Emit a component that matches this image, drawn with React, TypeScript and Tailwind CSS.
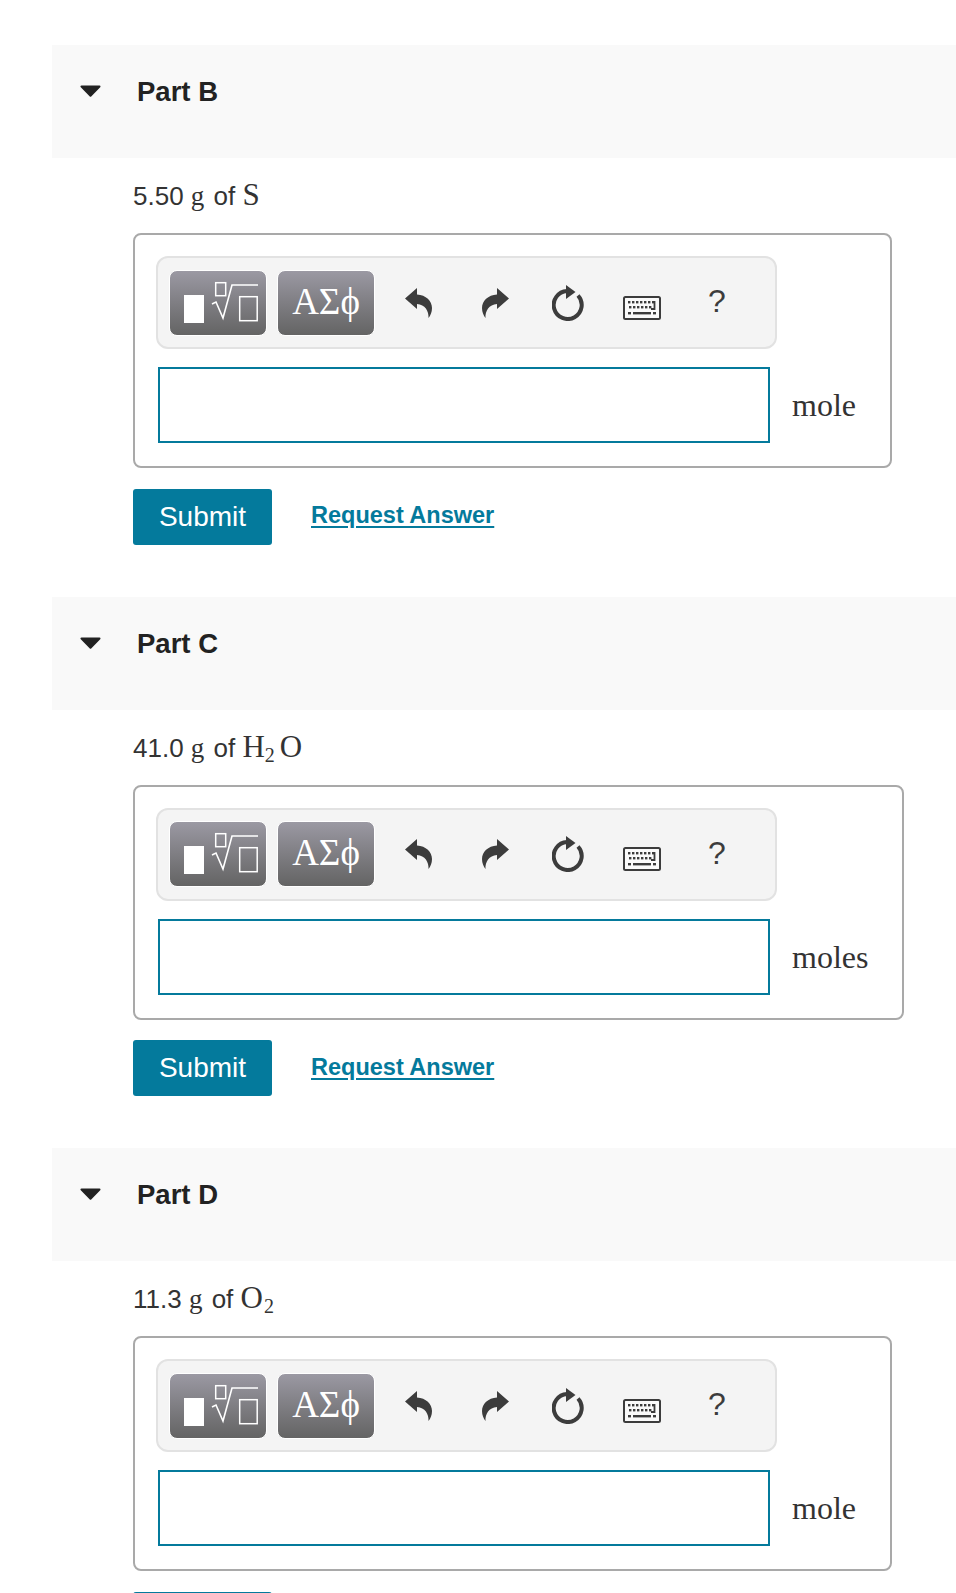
import type { ReactNode } from 'react'

const serif = 'font-["Liberation_Serif",serif]'

function Undo({ flip = false }: { flip?: boolean }) {
  return (
    <svg width="27" height="30" viewBox="0 0 27 30" className={flip ? '-scale-x-100' : ''}>
      <path
        d="M0 10.5 L12 0 V6.5 C21 7 27 13 27 20 C27 24 25.5 27.5 23.5 30 C24 23 20 16.5 12 16 V21 Z"
        fill="#3c3c3c"
      />
    </svg>
  )
}

function Reload() {
  return (
    <svg width="32" height="36" viewBox="0 0 32 36">
      <path d="M15 6 A14 14 0 1 0 26 10.5" fill="none" stroke="#3c3c3c" strokeWidth="4" />
      <path d="M14 0 L23.5 7 L14 14 Z" fill="#3c3c3c" />
    </svg>
  )
}

function KeyboardIcon() {
  const top = [5, 9, 13, 17, 21, 25, 29]
  return (
    <svg width="38" height="24" viewBox="0 0 38 24">
      <rect x="1" y="1" width="36" height="22" rx="1.5" fill="#fafafa" stroke="#3c3c3c" strokeWidth="2" />
      {top.map((x) => (
        <rect key={x} x={x} y="5" width="2.4" height="2.4" fill="#3c3c3c" />
      ))}
      {top.slice(0, 6).map((x) => (
        <rect key={x} x={x + 1} y="10" width="2.4" height="2.4" fill="#3c3c3c" />
      ))}
      <path d="M31.5 5 V13 H28" fill="none" stroke="#3c3c3c" strokeWidth="1.8" />
      <rect x="5" y="16" width="3" height="2.4" fill="#3c3c3c" />
      <rect x="10" y="16" width="18" height="2.4" fill="#3c3c3c" />
      <rect x="30" y="16" width="3" height="2.4" fill="#3c3c3c" />
    </svg>
  )
}

function Toolbar() {
  return (
    <div className="flex h-[93px] w-[621px] items-center rounded-xl border-2 border-[#e2e2e2] bg-[#f4f4f4] pl-[11px]">
      <div className="h-[66px] w-[98px] rounded-lg border border-white bg-gradient-to-b from-[#9b99a3] to-[#646464]">
        <svg width="96" height="64" viewBox="0 0 96 64">
          <rect x="14" y="24" width="20" height="28" fill="#fff" />
          <rect x="45.7" y="11.7" width="10" height="13" fill="none" stroke="#fff" strokeWidth="1.5" />
          <path d="M42 33 L46 31 L53 47 L62 14 H88" fill="none" stroke="#fff" strokeWidth="1.6" />
          <rect x="69.7" y="25.7" width="17.5" height="24" fill="none" stroke="#fff" strokeWidth="1.5" />
        </svg>
      </div>
      <div className={`ml-[10px] flex h-[66px] w-[98px] items-center justify-center rounded-lg border border-white bg-gradient-to-b from-[#9b99a3] to-[#646464] pb-[2px] text-[37px] text-white ${serif}`}>
        ΑΣϕ
      </div>
      <div className="ml-[30px]"><Undo /></div>
      <div className="ml-[50px]"><Undo flip /></div>
      <div className="ml-[43px]"><Reload /></div>
      <div className="ml-[39px] mt-[10px]"><KeyboardIcon /></div>
      <div className="ml-[47px] -mt-[3px] font-['Liberation_Sans',sans-serif] text-[32px] leading-none text-[#3c3c3c]">?</div>
    </div>
  )
}

function Part({ label, prompt, unit, cut = false }: { label: string; prompt: ReactNode; unit: string; cut?: boolean }) {
  return (
    <section className="mb-[52px]">
      <div className="flex h-[113px] items-start bg-[#f9f9f9] pl-[28px] pt-[31px]">
        <svg width="21" height="12" viewBox="0 0 21 12" className="mt-[9px]">
          <path d="M1.5 1.5 H19.5 L10.5 10.8 Z" fill="#222" stroke="#222" strokeWidth="2" strokeLinejoin="round" />
        </svg>
        <h2 className="ml-[36px] text-[27.5px] font-bold leading-[32px] text-[#222]">{label}</h2>
      </div>
      <div className="pl-[81px]">
        <p className="mt-[19.1px] h-[36px] text-[26px] leading-[36px] text-[#333]">{prompt}</p>
        <div className="mt-[20px] flex w-fit flex-col rounded-lg border-2 border-[#a9a9a9] pb-[23px] pl-[21px] pr-[34px] pt-[21px]">
          <Toolbar />
          <div className="mt-[18px] flex items-center">
            <div className="ml-[2px] h-[76px] w-[612px] border-2 border-[#047a9c] bg-white" />
            <span className={`ml-[22px] text-[32px] text-[#333] ${serif}`}>{unit}</span>
          </div>
        </div>
        {/* last row only shows its top edge before the page ends */}
        {cut ? (
          <div className="mt-[20.5px] h-[56px] w-[139px] rounded-[3px] bg-[#047a9c]" />
        ) : (
          <div className="mt-[20.5px] flex items-center">
            <button className="h-[56px] w-[139px] rounded-[3px] bg-[#047a9c] text-[28px] text-white">Submit</button>
            <a className="mb-[2px] ml-[39px] text-[23.5px] font-bold text-[#047a9c] underline underline-offset-[3px]">Request Answer</a>
          </div>
        )}
      </div>
    </section>
  )
}

const G = () => <span className={`${serif} mr-[2px] text-[27px]`}>g</span>
const M = ({ children }: { children: ReactNode }) => <span className={`${serif} text-[31px]`}>{children}</span>
const Sub = ({ children, gap = false }: { children: ReactNode; gap?: boolean }) => (
  <sub className={`${serif} text-[20px] leading-none ${gap ? 'mr-[5px]' : 'ml-[1px]'}`}>{children}</sub>
)

export default function App() {
  return (
    <div className="h-[1593px] overflow-hidden bg-white pl-[52px] pt-[45px] font-['Liberation_Sans',sans-serif]">
      <Part label="Part B" unit="mole" prompt={<>5.50 <G /> of <M>S</M></>} />
      <Part label="Part C" unit="moles" prompt={<>41.0 <G /> of <M>H<Sub gap>2</Sub>O</M></>} />
      <Part label="Part D" unit="mole" cut prompt={<>11.3 <G /> of <M>O<Sub>2</Sub></M></>} />
    </div>
  )
}
